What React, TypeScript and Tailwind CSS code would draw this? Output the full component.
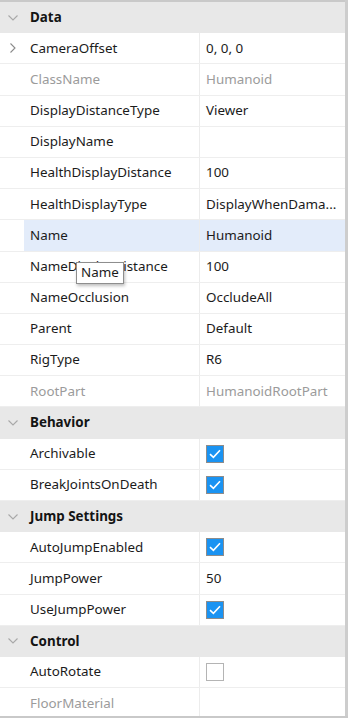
import React from 'react'

type Row = {
  name: string
  value?: string
  kind?: 'text' | 'check'
  checked?: boolean
  disabled?: boolean
  expandable?: boolean
  selected?: boolean
}

type Group = { title: string; rows: Row[] }

const groups: Group[] = [
  {
    title: 'Data',
    rows: [
      { name: 'CameraOffset', value: '0, 0, 0', expandable: true },
      { name: 'ClassName', value: 'Humanoid', disabled: true },
      { name: 'DisplayDistanceType', value: 'Viewer' },
      { name: 'DisplayName', value: '' },
      { name: 'HealthDisplayDistance', value: '100' },
      { name: 'HealthDisplayType', value: 'DisplayWhenDama...' },
      { name: 'Name', value: 'Humanoid', selected: true },
      { name: 'NameDisplayDistance', value: '100' },
      { name: 'NameOcclusion', value: 'OccludeAll' },
      { name: 'Parent', value: 'Default' },
      { name: 'RigType', value: 'R6' },
      { name: 'RootPart', value: 'HumanoidRootPart', disabled: true },
    ],
  },
  {
    title: 'Behavior',
    rows: [
      { name: 'Archivable', kind: 'check', checked: true },
      { name: 'BreakJointsOnDeath', kind: 'check', checked: true },
    ],
  },
  {
    title: 'Jump Settings',
    rows: [
      { name: 'AutoJumpEnabled', kind: 'check', checked: true },
      { name: 'JumpPower', value: '50' },
      { name: 'UseJumpPower', kind: 'check', checked: true },
    ],
  },
  {
    title: 'Control',
    rows: [
      { name: 'AutoRotate', kind: 'check', checked: false },
      { name: 'FloorMaterial', value: '', disabled: true },
    ],
  },
]

function ChevronDown() {
  return (
    <svg width="10" height="6" viewBox="0 0 10 6" className="text-[#a8a8a8]">
      <path d="M0.5 0.5 L5 5 L9.5 0.5" fill="none" stroke="currentColor" strokeWidth="1.1" />
    </svg>
  )
}

function ChevronRight() {
  return (
    <svg width="6" height="10" viewBox="0 0 6 10" className="text-[#8a8a8a]">
      <path d="M0.5 0.5 L5 5 L0.5 9.5" fill="none" stroke="currentColor" strokeWidth="1.1" />
    </svg>
  )
}

function Checkbox({ checked }: { checked?: boolean }) {
  if (!checked) {
    return <div className="w-[18px] h-[18px] border border-[#b4b4b4] bg-white" />
  }
  return (
    <div className="w-[18px] h-[18px] border border-[#8c8c8c] bg-[#1a93f2] flex items-center justify-center">
      <svg width="12" height="10" viewBox="0 0 12 10">
        <path d="M1 5.2 L4.4 8.4 L11 1.2" fill="none" stroke="white" strokeWidth="1.6" />
      </svg>
    </div>
  )
}

function PropRow({ row }: { row: Row }) {
  const textColor = row.disabled ? 'text-[#9b9b9b]' : 'text-[#1b1b1b]'
  return (
    <div className="flex h-[31.2px] border-b border-[#eeeeee]">
      <div className="w-6 flex items-center justify-center pl-[1px]">
        {row.expandable && <ChevronRight />}
      </div>
      <div className={`flex flex-1 ${row.selected ? 'bg-[#e3ecfa]' : 'bg-white'}`}>
        <div className={`w-[176px] pl-[6px] flex items-center border-r border-[#ececec] ${textColor}`}>
          {row.name}
        </div>
        <div className={`flex-1 pl-[6px] flex items-center whitespace-nowrap overflow-hidden ${textColor}`}>
          {row.kind === 'check' ? <Checkbox checked={row.checked} /> : row.value}
        </div>
      </div>
    </div>
  )
}

export default function App() {
  return (
    <div
      className="relative w-[348px] h-[718px] overflow-hidden bg-white text-[13.4px] leading-none"
      style={{ fontFamily: '"Noto Sans", "Open Sans", sans-serif' }}
    >
      <div className="flex h-full border-b-2 border-[#c9c9c9]">
        <div className="flex-1 flex flex-col border-t-[2px] border-[#c9c9c9] overflow-hidden">
          {groups.map((g) => (
            <div key={g.title}>
              <div className="flex h-[31.2px] bg-[#e8e8e8]">
                <div className="w-6 flex items-center justify-center pl-[1px]">
                  <ChevronDown />
                </div>
                <div className="pl-[6px] flex items-center font-bold text-[#141414]">{g.title}</div>
              </div>
              {g.rows.map((r) => (
                <PropRow key={r.name} row={r} />
              ))}
            </div>
          ))}
        </div>
        <div className="w-[3px] bg-[#cdcdcd]" />
      </div>

      {/* hover tooltip */}
      <div className="absolute left-[76px] top-[262px] bg-white border border-[#8e8e8e] px-[4px] pt-[3px] pb-[4px] text-[13.4px] text-[#1b1b1b] shadow-[1px_2px_3px_rgba(0,0,0,0.25)]">
        Name
      </div>
    </div>
  )
}
